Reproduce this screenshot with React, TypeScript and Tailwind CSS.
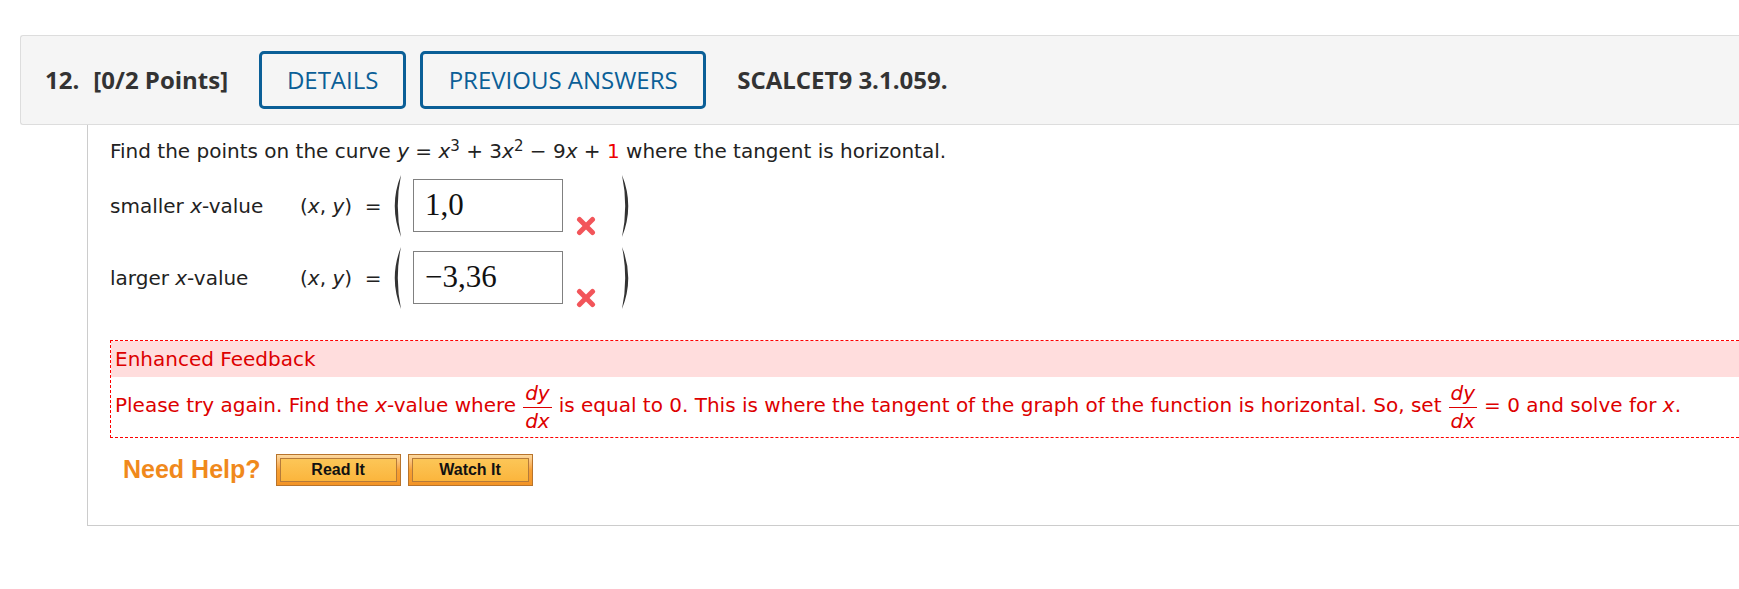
import React from 'react';

const body = { fontFamily: '"DejaVu Sans", Verdana, sans-serif' };
const head = { fontFamily: '"Open Sans", sans-serif' };

function Paren({ right = false }: { right?: boolean }) {
  return (
    <svg width="12" height="64" viewBox="0 0 12 64" className={right ? 'scale-x-[-1]' : ''}>
      <path d="M11 1 Q-1.5 32 11 63 Q4.6 32 11 1 Z" fill="#333" />
    </svg>
  );
}

function WrongMark() {
  return (
    <svg width="22" height="20" viewBox="0 0 22 20">
      <g stroke="#f2555a" strokeWidth="5" strokeLinecap="round">
        <line x1="4.5" y1="3.5" x2="17.5" y2="16.5" />
        <line x1="17.5" y1="3.5" x2="4.5" y2="16.5" />
      </g>
    </svg>
  );
}

function Frac({ num, den }: { num: string; den: string }) {
  return (
    <span className="flex flex-col items-center mx-[7px] leading-[27px]">
      <i className="px-[2px]">{num}</i>
      <span className="block w-full h-px bg-[#d00]" />
      <i className="px-[2px]">{den}</i>
    </span>
  );
}

function AnswerRow({ label, value }: { label: string; value: string }) {
  return (
    <div className="flex items-center h-[53px]">
      <div className="w-[190px] text-[20px] text-[#222]" style={body}>
        {label} <i>x</i>-value
      </div>
      <div className="w-[90px] text-[20px] text-[#222]" style={body}>
        (<i>x</i>, <i>y</i>) &nbsp;=
      </div>
      <Paren />
      <div
        className="ml-[11px] w-[150px] h-[53px] border border-[#808080] bg-white flex items-center pl-[11px] text-[31px] text-[#111]"
        style={{ fontFamily: '"Liberation Serif", "DejaVu Serif", serif' }}
      >
        {value}
      </div>
      <div className="ml-[12px] self-end mb-[-4px]">
        <WrongMark />
      </div>
      <div className="ml-[24px]">
        <Paren right />
      </div>
    </div>
  );
}

function HelpButton({ label }: { label: string }) {
  return (
    <div className="w-[125px] h-[32px] border border-[#b8742c] bg-gradient-to-b from-[#fcd9a0] via-[#f7a033] to-[#f39426] p-[3px]">
      <div
        className="h-full border border-[#b57a3a] bg-gradient-to-b from-[#fcc657] to-[#fbb53c] flex items-center justify-center text-[16px] font-bold text-[#111]"
        style={{ fontFamily: '"Liberation Sans", Arial, sans-serif' }}
      >
        {label}
      </div>
    </div>
  );
}

export default function App() {
  return (
    <div className="w-[1739px] h-[589px] bg-white overflow-hidden pt-[35px]">
      {/* question header */}
      <div
        className="ml-[20px] h-[90px] bg-[#f5f5f5] border border-r-0 border-[#dddddd] rounded-l-[3px] flex items-center pl-[24px] text-[#333]"
        style={head}
      >
        <span className="text-[24px] font-bold">12.</span>
        <span className="ml-[14px] text-[24px] font-bold">[0/2 Points]</span>
        <div className="ml-[31px] w-[147px] h-[58px] border-[3px] border-[#0b5f97] rounded-[5px] flex items-center justify-center text-[24px] text-[#0b5f97]">
          DETAILS
        </div>
        <div className="ml-[14px] w-[286px] h-[58px] border-[3px] border-[#0b5f97] rounded-[5px] flex items-center justify-center text-[24px] text-[#0b5f97]">
          PREVIOUS ANSWERS
        </div>
        <span className="ml-[31px] text-[24px] font-bold">SCALCET9 3.1.059.</span>
      </div>

      {/* question body */}
      <div className="ml-[87px] h-[401px] border-l border-b border-[#cccccc] pl-[22px] pt-[12px]">
        <div className="h-[28px] flex items-center text-[20px] text-[#222]" style={body}>
          <span>
            Find the points on the curve <i>y</i> = <i>x</i>
            <sup className="text-[15px]">3</sup> + 3<i>x</i>
            <sup className="text-[15px]">2</sup> − 9<i>x</i> + <span className="text-[#e00]">1</span> where the
            tangent is horizontal.
          </span>
        </div>

        <div className="mt-[14px]">
          <AnswerRow label="smaller" value="1,0" />
        </div>
        <div className="mt-[19px]">
          <AnswerRow label="larger" value="−3,36" />
        </div>

        {/* feedback */}
        <div className="mt-[36px] border border-dashed border-[#ff0000] border-r-0 text-[20px] text-[#dd0000]" style={body}>
          <div className="h-[36px] bg-[#ffdddd] flex items-center pl-[4px]">Enhanced Feedback</div>
          <div className="h-[60px] flex items-center pl-[4px] whitespace-pre">
            <span className="mb-[5px]">
              Please try again. Find the <i>x</i>-value where
            </span>
            <Frac num="dy" den="dx" />
            <span className="mb-[5px]">
              is equal to 0. This is where the tangent of the graph of the function is horizontal. So, set
            </span>
            <Frac num="dy" den="dx" />
            <span className="mb-[5px]">
              = 0 and solve for <i>x</i>.
            </span>
          </div>
        </div>

        {/* need help */}
        <div className="mt-[13px] flex items-center gap-[7px]">
          <span
            className="text-[25px] font-bold text-[#f0891c] ml-[13px] mr-[8px]"
            style={{ fontFamily: '"Liberation Sans", Arial, sans-serif' }}
          >
            Need Help?
          </span>
          <HelpButton label="Read It" />
          <HelpButton label="Watch It" />
        </div>
      </div>
    </div>
  );
}
